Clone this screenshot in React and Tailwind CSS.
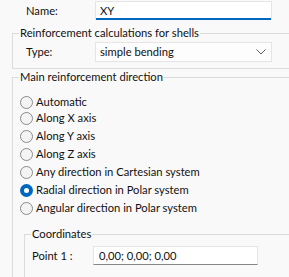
import React, { useState } from 'react';

const options = [
    'Automatic',
    'Along X axis',
    'Along Y axis',
    'Along Z axis',
    'Any direction in Cartesian system',
    'Radial direction in Polar system',
    'Angular direction in Polar system',
];

function Radio({ label, checked, onClick, first }) {
    return (
        <div
            onClick={onClick}
            className={`flex items-center gap-[3px] pl-[1px] cursor-default ${first ? 'h-[14px]' : 'h-[18px]'}`}
        >
            {checked ? (
                <span className="flex h-[13px] w-[13px] items-center justify-center rounded-full bg-[#0067c0]">
                    <span className="h-[5px] w-[5px] rounded-full bg-white" />
                </span>
            ) : (
                <span className="h-[13px] w-[13px] rounded-full border border-[#8a8a8a] bg-[#f4f4f4]" />
            )}
            <span>{label}</span>
        </div>
    );
}

export default function App() {
    const [name, setName] = useState('XY');
    const [dir, setDir] = useState(5);

    return (
        <div
            className="relative h-[277px] w-[289px] overflow-hidden bg-[#f9f9f9] text-[11.2px] leading-[16px] text-[#111]"
            style={{ fontFamily: 'Lato, "Noto Sans", sans-serif' }}
        >
            {/* name row */}
            <div className="flex items-center pt-[1px]">
                <span className="w-[95px] pl-[26px]">Name:</span>
                <div className="flex h-[19px] w-[177px] items-center border border-b-0 border-[#e5e5e5] bg-white pl-[4px] shadow-[inset_0_-2px_0_#0067c0]">
                    <input
                        value={name}
                        onChange={(e) => setName(e.target.value)}
                        className="w-full bg-transparent outline-none"
                    />
                </div>
            </div>

            {/* reinforcement calc */}
            <fieldset className="ml-[12px] mt-[5px] w-[300px] border border-r-0 border-[#dcdcdc] pb-[6px] pl-[6px]">
                <legend className="px-[1px]">Reinforcement calculations for shells</legend>
                <div className="mt-[1px] flex items-center">
                    <span className="w-[76px] pl-[7px]">Type:</span>
                    <div className="flex h-[20px] w-[177px] items-center justify-between border border-[#e5e5e5] bg-[#fdfdfd] pl-[4px] pr-[5px]">
                        <span>simple bending</span>
                        <svg width="10" height="6" viewBox="0 0 10 6" fill="none">
                            <path d="M0.5 0.5 L5 5 L9.5 0.5" stroke="#5f5f5f" strokeWidth="1" />
                        </svg>
                    </div>
                </div>
            </fieldset>

            {/* main direction */}
            <fieldset className="ml-[12px] h-[220px] w-[300px] border border-r-0 border-b-0 border-[#dcdcdc] pl-[6px]">
                <legend className="px-[1px]">Main reinforcement direction</legend>
                <div className="mt-[10px] flex flex-col">
                    {options.map((o, i) => (
                        <Radio key={o} label={o} first={i === 0} checked={dir === i} onClick={() => setDir(i)} />
                    ))}
                </div>

                <fieldset className="ml-[5px] mt-[9px] h-[60px] w-[280px] border border-r-0 border-b-0 border-[#dcdcdc] pl-[6px]">
                    <legend className="px-[1px]">Coordinates</legend>
                    <div className="mt-[4px] flex items-center">
                        <span className="w-[62px] pl-[1px]">Point 1 :</span>
                        <div className="flex h-[19px] w-[165px] items-center border border-[#e5e5e5] border-b-[#868686] bg-white pl-[5px]">
                            0,00; 0,00; 0,00
                        </div>
                    </div>
                </fieldset>
            </fieldset>
        </div>
    );
}
